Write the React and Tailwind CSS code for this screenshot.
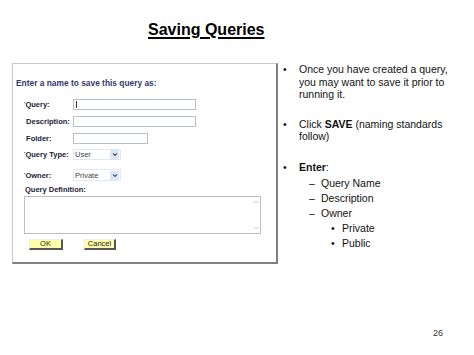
import React from 'react';

const Label = ({ req, children }) => (
  <div className="w-[49px] shrink-0 font-bold text-[7.5px] text-[#1a1a33] leading-none">
    {req && <span className="font-normal">'</span>}
    {children}
  </div>
);

const Select = ({ value, h }) => (
  <div className={`w-[48px] ${h} flex items-center border border-[#e2e6ee] bg-white`}>
    <span className="flex-1 pl-[1px] text-[7.5px] text-[#444] leading-none">{value}</span>
    <span className="w-[9px] h-[9px] mr-[1px] bg-[#dde6f4] flex items-center justify-center">
      <svg width="6" height="5" viewBox="0 0 6 5">
        <path d="M1 1.5 L3 3.5 L5 1.5" stroke="#4a5e8c" strokeWidth="1.2" fill="none" />
      </svg>
    </span>
  </div>
);

const Button = ({ children, w }) => (
  <div
    className={`${w} h-[11px] bg-[#ffffa8] border-t border-l border-[#eeeeee] border-r-2 border-b-2 border-r-[#555] border-b-[#555] flex items-center justify-center text-[7.5px] text-[#222] leading-none`}
  >
    {children}
  </div>
);

const FormShot = () => (
  <div className="ml-[12px] w-[266px] h-[201px] bg-white border-t border-l border-[#c8c8c8] border-r-2 border-b-2 border-r-[#808080] border-b-[#808080] pl-[3px] pt-[15px]">
    <div className="font-bold text-[8.4px] text-[#383870] leading-none">Enter a name to save this query as:</div>
    <div className="pl-[8px] mt-[12px] flex flex-col gap-[6px]">
      <div className="flex items-center">
        <Label req>Query:</Label>
        <div className="w-[123px] h-[11px] border border-[#b9c0cc] pl-[2px] flex items-center">
          <div className="w-px h-[7px] bg-[#333]" />
        </div>
      </div>
      <div className="flex items-center">
        <Label>&nbsp;Description:</Label>
        <div className="w-[123px] h-[11px] border border-[#b9c0cc]" />
      </div>
      <div className="flex items-center">
        <Label>&nbsp;Folder:</Label>
        <div className="w-[75px] h-[11px] border border-[#b9c0cc]" />
      </div>
    </div>
    <div className="pl-[8px] mt-[5px] flex flex-col gap-[9px]">
      <div className="flex items-center">
        <Label req>Query Type:</Label>
        <Select value="User" h="h-[11px]" />
      </div>
      <div className="flex items-center">
        <Label req>Owner:</Label>
        <Select value="Private" h="h-[12px]" />
      </div>
    </div>
    <div className="pl-[9px] mt-[5px] font-bold text-[7.5px] text-[#1a1a33] leading-none">Query Definition:</div>
    <div className="ml-[8px] mt-[2px] w-[237px] h-[38px] border border-[#b9c0cc] flex justify-end">
      <div className="w-[9px] flex flex-col justify-between items-center py-[3px]">
        <svg width="6" height="4" viewBox="0 0 6 4">
          <path d="M1 3 L3 1 L5 3" stroke="#c4c8d0" strokeWidth="1" fill="none" />
        </svg>
        <svg width="6" height="4" viewBox="0 0 6 4">
          <path d="M1 1 L3 3 L5 1" stroke="#c4c8d0" strokeWidth="1" fill="none" />
        </svg>
      </div>
    </div>
    <div className="ml-[13px] mt-[5px] flex gap-[21px]">
      <Button w="w-[34px]">OK</Button>
      <Button w="w-[32px]">Cancel</Button>
    </div>
  </div>
);

const Bullets = () => (
  <div className="flex-1 pl-[5px] mt-[0px] text-[10.5px] leading-[12.6px] text-[#111]">
    <div className="flex">
      <span className="w-[16px] shrink-0">•</span>
      <span className="w-[156px]">Once you have created a query, you may want to save it prior to running it.</span>
    </div>
    <div className="flex mt-[17px]">
      <span className="w-[16px] shrink-0">•</span>
      <span className="w-[156px]">
        Click <b>SAVE</b> (naming standards follow)
      </span>
    </div>
    <div className="flex mt-[18px]">
      <span className="w-[16px] shrink-0">•</span>
      <span>
        <b>Enter</b>:
      </span>
    </div>
    <div className="pl-[26px] mt-[3px] flex flex-col gap-[2.4px]">
      <div className="flex">
        <span className="w-[12px] shrink-0">–</span>
        <span>Query Name</span>
      </div>
      <div className="flex">
        <span className="w-[12px] shrink-0">–</span>
        <span>Description</span>
      </div>
      <div className="flex">
        <span className="w-[12px] shrink-0">–</span>
        <span>Owner</span>
      </div>
      <div className="flex pl-[22px]">
        <span className="w-[11px] shrink-0">•</span>
        <span>Private</span>
      </div>
      <div className="flex pl-[22px]">
        <span className="w-[11px] shrink-0">•</span>
        <span>Public</span>
      </div>
    </div>
  </div>
);

export default function App() {
  return (
    <div className="w-[474px] h-[355px] bg-white flex flex-col font-['Liberation_Sans',Arial,sans-serif]">
      <div className="pt-[18px] pl-[148px]">
        <span className="font-bold text-[16px] leading-none underline decoration-[1.5px] underline-offset-[2px]">
          Saving Queries
        </span>
      </div>
      <div className="flex mt-[21px]">
        <FormShot />
        <Bullets />
      </div>
      <div className="mt-auto mb-[17px] pr-[31px] text-right text-[9px] text-[#333] leading-none">26</div>
    </div>
  );
}
